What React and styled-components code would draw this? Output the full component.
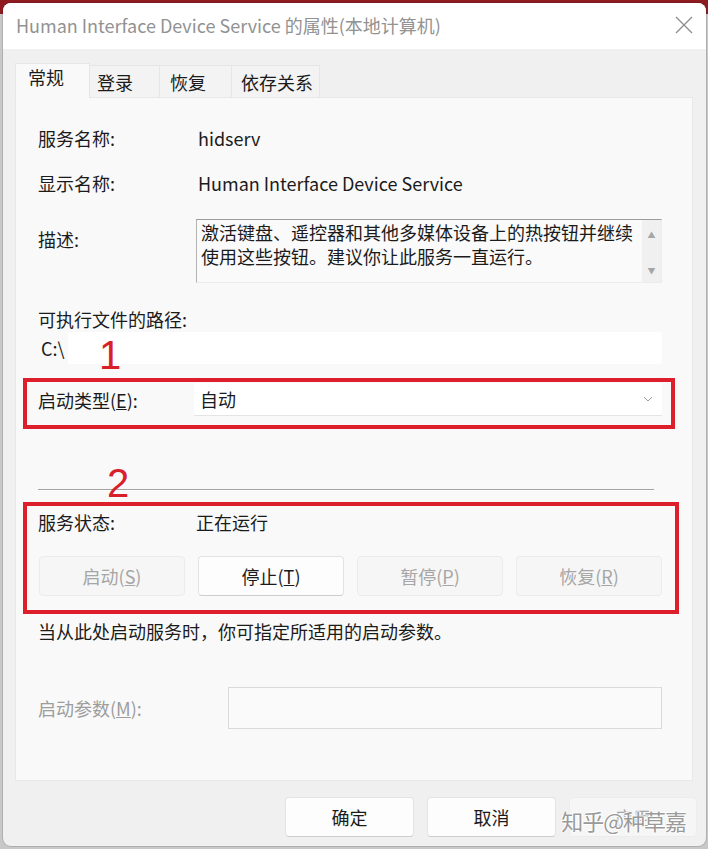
import React from 'react'
import styled, { createGlobalStyle } from 'styled-components'

const GlobalStyle = createGlobalStyle`
  html, body {
    margin: 0;
    padding: 0;
  }
  body {
    font-family: "Noto Sans CJK SC", "Noto Sans", sans-serif;
    color: #1b1b1b;
  }
`

const Desktop = styled.div`
  box-sizing: border-box;
  width: 708px;
  height: 849px;
  padding: 3px 2px 0 3px;
  background: linear-gradient(#8e1b20 0 14px, #c8c8c8 14px);
  overflow: hidden;
`

const Window = styled.div`
  display: flex;
  flex-direction: column;
  height: 843px;
  background: #f0f0f0;
  border-radius: 8px;
  overflow: hidden;
  box-shadow: 0 0 0 1px rgba(0, 0, 0, 0.12);
`

const TitleBar = styled.div`
  box-sizing: border-box;
  display: flex;
  align-items: center;
  justify-content: space-between;
  height: 46px;
  padding: 0 13px 3px 13px;
  background: #ffffff;
  font-size: 18px;
  color: #929292;
`

const Body = styled.div`
  padding: 13px 13px 0 12px;
`

const TabBar = styled.div`
  display: flex;
  align-items: flex-end;
  height: 35px;
`

const Tab = styled.div`
  box-sizing: border-box;
  width: ${(p) => p.w}px;
  height: ${(p) => (p.active ? 35 : 32)}px;
  padding: 0 0 ${(p) => (p.active ? 8 : 0)}px ${(p) => p.pad}px;
  display: flex;
  align-items: center;
  font-size: 18px;
  color: #1b1b1b;
  background: ${(p) => (p.active ? '#f9f9f9' : '#f3f3f3')};
  border: 1px solid #e6e6e6;
  border-bottom: none;
  border-left: ${(p) => (p.first ? '1px solid #e6e6e6' : 'none')};
  position: relative;
  z-index: ${(p) => (p.active ? 1 : 0)};
  margin-bottom: ${(p) => (p.active ? -1 : 0)}px;
`

const Panel = styled.div`
  box-sizing: border-box;
  height: 684px;
  padding: 25px 30px 0 22px;
  background: #f9f9f9;
  border: 1px solid #e8e8e8;
  font-size: 18px;
`

const Row = styled.div`
  display: grid;
  grid-template-columns: ${(p) => p.label || 160}px 1fr;
  align-items: ${(p) => (p.top ? 'start' : 'center')};
  min-height: ${(p) => p.h || 30}px;
  margin-top: ${(p) => p.mt || 0}px;
`

const Label = styled.div`
  line-height: 26px;
  padding-top: ${(p) => p.pt || 0}px;
  color: ${(p) => (p.disabled ? '#9d9d9d' : '#1b1b1b')};
`

const Value = styled.div`
  line-height: 26px;
`

const DescBox = styled.div`
  box-sizing: border-box;
  display: flex;
  height: 64px;
  margin-left: -2px;
  border-top: 1px solid #9c9c9c;
  border-left: 1px solid #b4b4b4;
  border-right: 1px solid #ececec;
  border-bottom: 1px solid #ececec;
  background: #fafafa;
`

const DescText = styled.div`
  flex: 1;
  padding: 0 0 0 4px;
  line-height: 24px;
`

const ScrollBar = styled.div`
  width: 19px;
  display: flex;
  flex-direction: column;
  justify-content: space-between;
  align-items: center;
  padding: 9px 0 6px;
  background: #f0f0f0;
  font-size: 8px;
  color: #a6a6a6;
`

const PathLabel = styled.div`
  margin-top: 23px;
  line-height: 26px;
`

const PathRow = styled.div`
  position: relative;
  display: flex;
  align-items: center;
  height: 32px;
  margin-left: 3px;
`

const PathMask = styled.div`
  flex: 1;
  align-self: stretch;
  margin-left: 3px;
  background: #ffffff;
`

const Mark = styled.div`
  position: absolute;
  left: ${(p) => p.x}px;
  top: ${(p) => p.y}px;
  font-family: "Liberation Sans", "Noto Sans", sans-serif;
  font-size: 40px;
  line-height: 40px;
  color: #d8202b;
`

const Highlight = styled.div`
  margin: ${(p) => p.mt}px ${(p) => -p.r}px 0 -15px;
  padding: ${(p) => p.pt}px ${(p) => p.r - 4}px ${(p) => p.pb}px 11px;
  border: 4px solid #dc1f2a;
`

const Select = styled.div`
  box-sizing: border-box;
  display: flex;
  align-items: center;
  justify-content: space-between;
  height: 33px;
  margin-left: -2px;
  padding: 0 9px 0 6px;
  background: #ffffff;
  border-bottom: 1px solid #e4e4e4;
`

const Separator = styled.div`
  position: relative;
  margin: 60px 8px 0 0;
  height: 0;
  border-top: 1px solid #a3a3a3;
  border-bottom: 1px solid #ffffff;
`

const ButtonGrid = styled.div`
  display: grid;
  grid-template-columns: repeat(4, 1fr);
  gap: 13px;
  margin-top: 20px;
  padding-left: 1px;
`

const Button = styled.div`
  box-sizing: border-box;
  display: flex;
  align-items: center;
  justify-content: center;
  height: 40px;
  width: ${(p) => (p.w ? `${p.w}px` : 'auto')};
  font-size: 18px;
  border-radius: 4px;
  color: ${(p) => (p.disabled ? '#a6a6a6' : '#1b1b1b')};
  background: ${(p) => (p.disabled ? '#f6f6f6' : '#fdfdfd')};
  border: 1px solid ${(p) => (p.disabled ? '#ececec' : '#e3e3e3')};
  border-bottom-color: ${(p) => (p.disabled ? '#ececec' : '#cdcdcd')};
`

const Hint = styled.div`
  margin-top: 5px;
  line-height: 24px;
`

const ParamInput = styled.div`
  box-sizing: border-box;
  height: 42px;
  background: #fafafa;
  border: 1px solid #dadada;
`

const Footer = styled.div`
  position: relative;
  display: flex;
  justify-content: flex-end;
  gap: 13px;
  margin-top: 16px;
  padding-right: 9px;
`

const Watermark = styled.div`
  position: absolute;
  right: 20px;
  top: 7px;
  font-size: 22px;
  letter-spacing: -1px;
  color: #9a9a9a;
  text-shadow: -1px 0 #fff, 1px 0 #fff, 0 -1px #fff, 0 1px #fff;
  pointer-events: none;
`

const CloseIcon = () => (
  <svg width="18" height="18" viewBox="0 0 18 18">
    <path d="M1 1 L17 17 M17 1 L1 17" stroke="#8e8e8e" strokeWidth="1.3" fill="none" />
  </svg>
)

const Chevron = () => (
  <svg width="10" height="6" viewBox="0 0 10 6">
    <path d="M1 1 L5 5 L9 1" stroke="#9a9a9a" strokeWidth="1" fill="none" />
  </svg>
)

const tabs = [
  { name: '常规', w: 75, pad: 12, active: true },
  { name: '登录', w: 70, pad: 7 },
  { name: '恢复', w: 72, pad: 10 },
  { name: '依存关系', w: 88, pad: 9 },
]

const controls = [
  { name: '启动', key: 'S', disabled: true },
  { name: '停止', key: 'T' },
  { name: '暂停', key: 'P', disabled: true },
  { name: '恢复', key: 'R', disabled: true },
]

const Accel = ({ k }) => (
  <span>
    (<u>{k}</u>)
  </span>
)

const App = () => {
  return (
    <>
      <GlobalStyle />
      <Desktop>
        <Window>
          <TitleBar>
            <span>Human Interface Device Service 的属性(本地计算机)</span>
            <CloseIcon />
          </TitleBar>
          <Body>
            <TabBar>
              {tabs.map((t, i) => (
                <Tab key={t.name} w={t.w} pad={t.pad} active={t.active} first={i === 0}>
                  {t.name}
                </Tab>
              ))}
            </TabBar>
            <Panel>
              <Row>
                <Label>服务名称:</Label>
                <Value>hidserv</Value>
              </Row>
              <Row mt={15}>
                <Label>显示名称:</Label>
                <Value>Human Interface Device Service</Value>
              </Row>
              <Row mt={21} top h={64}>
                <Label pt={7}>描述:</Label>
                <DescBox>
                  <DescText>
                    激活键盘、遥控器和其他多媒体设备上的热按钮并继续
                    <br />
                    使用这些按钮。建议你让此服务一直运行。
                  </DescText>
                  <ScrollBar>
                    <span>▲</span>
                    <span>▼</span>
                  </ScrollBar>
                </DescBox>
              </Row>
              <PathLabel>可执行文件的路径:</PathLabel>
              <PathRow>
                <span>C:\</span>
                <PathMask />
                <Mark x={58} y={3}>1</Mark>
              </PathRow>
              <Highlight mt={14} r={13} pt={1} pb={9}>
                <Row label={158} h={33}>
                  <Label>
                    启动类型(<u>E</u>):
                  </Label>
                  <Select>
                    <span>自动</span>
                    <Chevron />
                  </Select>
                </Row>
              </Highlight>
              <Separator>
                <Mark x={69} y={-27}>2</Mark>
              </Separator>
              <Highlight mt={11} r={17} pt={2} pb={14}>
                <Row label={158} h={28}>
                  <Label>服务状态:</Label>
                  <Value>正在运行</Value>
                </Row>
                <ButtonGrid>
                  {controls.map((c) => (
                    <Button key={c.key} disabled={c.disabled}>
                      {c.name}
                      <Accel k={c.key} />
                    </Button>
                  ))}
                </ButtonGrid>
              </Highlight>
              <Hint>当从此处启动服务时，你可指定所适用的启动参数。</Hint>
              <Row mt={44} label={190} h={42}>
                <Label disabled>
                  启动参数(<u>M</u>):
                </Label>
                <ParamInput />
              </Row>
            </Panel>
          </Body>
          <Footer>
            <Button w={129}>确定</Button>
            <Button w={129}>取消</Button>
            <Button w={128} disabled>
              应用
            </Button>
            <Watermark>知乎@种草嘉</Watermark>
          </Footer>
        </Window>
      </Desktop>
    </>
  )
}

export default App
